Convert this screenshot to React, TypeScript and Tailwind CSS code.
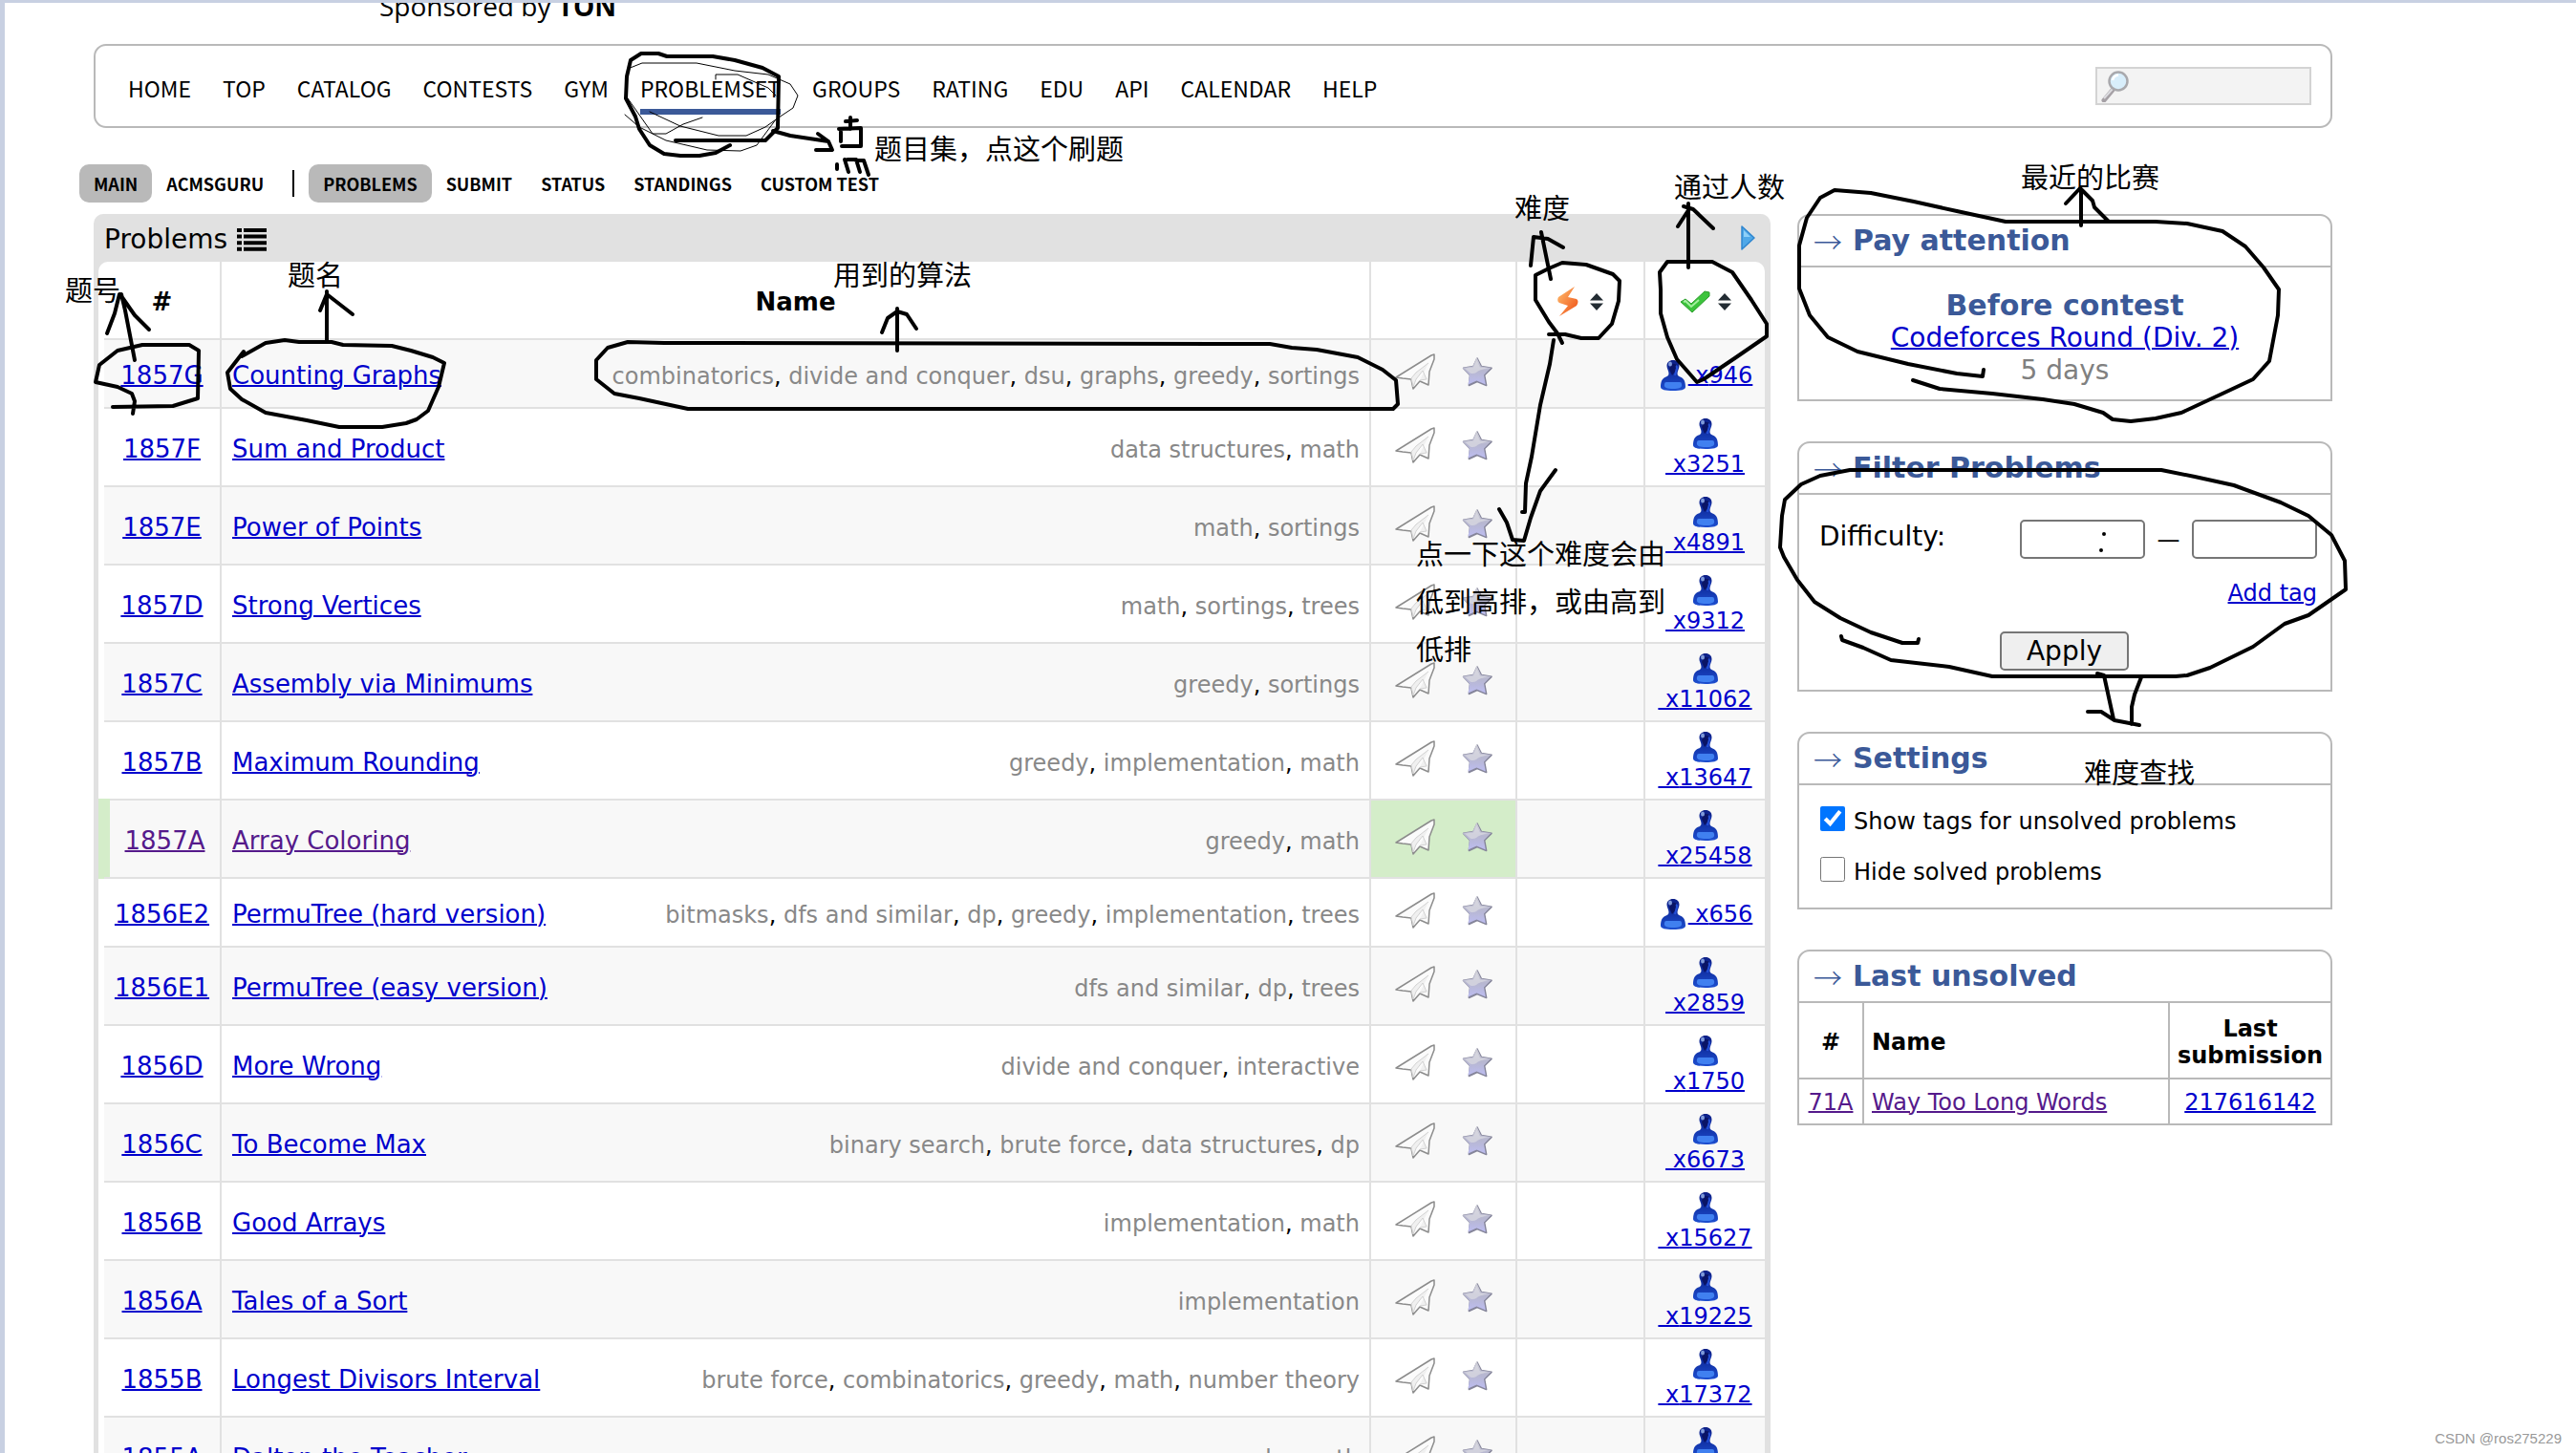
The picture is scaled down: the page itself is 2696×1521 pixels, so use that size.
import React from "react";

type Problem = { id: string; name: string; tags: string[]; solved: number; accepted?: boolean };

const NAV = ["HOME", "TOP", "CATALOG", "CONTESTS", "GYM", "PROBLEMSET", "GROUPS", "RATING", "EDU", "API", "CALENDAR", "HELP"];

const PROBLEMS: Problem[] = [
  { id: "1857G", name: "Counting Graphs", tags: ["combinatorics", "divide and conquer", "dsu", "graphs", "greedy", "sortings"], solved: 946 },
  { id: "1857F", name: "Sum and Product", tags: ["data structures", "math"], solved: 3251 },
  { id: "1857E", name: "Power of Points", tags: ["math", "sortings"], solved: 4891 },
  { id: "1857D", name: "Strong Vertices", tags: ["math", "sortings", "trees"], solved: 9312 },
  { id: "1857C", name: "Assembly via Minimums", tags: ["greedy", "sortings"], solved: 11062 },
  { id: "1857B", name: "Maximum Rounding", tags: ["greedy", "implementation", "math"], solved: 13647 },
  { id: "1857A", name: "Array Coloring", tags: ["greedy", "math"], solved: 25458, accepted: true },
  { id: "1856E2", name: "PermuTree (hard version)", tags: ["bitmasks", "dfs and similar", "dp", "greedy", "implementation", "trees"], solved: 656 },
  { id: "1856E1", name: "PermuTree (easy version)", tags: ["dfs and similar", "dp", "trees"], solved: 2859 },
  { id: "1856D", name: "More Wrong", tags: ["divide and conquer", "interactive"], solved: 1750 },
  { id: "1856C", name: "To Become Max", tags: ["binary search", "brute force", "data structures", "dp"], solved: 6673 },
  { id: "1856B", name: "Good Arrays", tags: ["implementation", "math"], solved: 15627 },
  { id: "1856A", name: "Tales of a Sort", tags: ["implementation"], solved: 19225 },
  { id: "1855B", name: "Longest Divisors Interval", tags: ["brute force", "combinatorics", "greedy", "math", "number theory"], solved: 17372 },
  { id: "1855A", name: "Dalton the Teacher", tags: ["greedy", "math"], solved: 21904 },
];

// Pen strokes, thick pen first and then the fine one
const INK = [
  "M707 147L801 147L814 134L815 80L798 71L769 63L746 59L698 59L689 56L671 56L660 63L656 80L655 103L665 122L669 135L680 152L695 161L712 163L732 163L749 160L764 152",
  "M809 137L827 142L867 148M856 140L867 148L871 157L854 157",
  "M885 127L897 126M890 123L890 135M878 135L901 134L901 153L881 153M880 138L880 148",
  "M876 172L876 177M884 167L888 180M887 167L896 167L900 180M896 168L904 168L909 183",
  "M141 377L131 325L127 308M112 349L120 328L125 308M127 310L141 330L156 345",
  "M118 426L181 425L207 417L208 367L198 361L149 361L123 367L104 382L100 400L123 405L138 412L141 420L139 433",
  "M342 357L342 305M335 325L342 308L369 329",
  "M253 373L278 359L298 356L313 358L347 358L359 361L410 362L430 367L453 374L465 380L459 405L448 430L436 439L425 443L400 447L355 447L321 440L278 432L253 418L241 407L238 390L255 368",
  "M939 367L939 323M923 348L929 333L939 326L949 329L959 344",
  "M657 358L695 359L1329 360L1352 364L1378 366L1421 374L1447 387L1461 398L1463 423L1458 428L720 428L669 417L643 412L624 397L624 377L636 364Z",
  "M1623 292L1613 243M1602 278L1605 248L1620 250L1636 259",
  "M1635 359L1630 349L1621 337L1607 314L1607 288L1621 281L1635 275L1660 277L1688 287L1695 294L1694 315L1687 339L1673 354L1655 354L1638 350L1621 350",
  "M1626 356L1622 381L1612 424L1603 478L1597 506L1596 536L1593 536M1569 533L1577 547L1583 565L1595 566L1602 542L1612 514L1628 492",
  "M1767 280L1767 213M1756 237L1767 220M1762 216L1772 219L1793 239",
  "M1737 285L1745 274L1792 274L1813 285L1833 314L1849 339L1849 352L1817 374L1783 397L1776 400L1755 376L1745 353L1738 328L1738 303Z",
  "M2178 236L2178 198M2162 213L2177 197L2190 210L2192 217L2207 232",
  "M2076 387L2075 394L2048 391L1997 381L1944 368L1913 353L1894 330L1883 302L1883 257L1891 228L1905 207L1920 199L1958 202L2003 211L2048 221L2099 232L2256 232L2289 234L2326 242L2350 258L2369 280L2385 303L2384 330L2375 378L2358 397L2326 412L2283 432L2256 438L2230 441L2211 439L2201 432L2171 423L2138 418L2085 412L2030 407L2002 398",
  "M2008 669L2007 673L1991 673L1958 662L1926 647L1899 630L1881 607L1867 583L1863 573L1865 540L1868 523L1885 507L1905 498L1936 492L2262 492L2297 499L2338 508L2387 526L2416 540L2440 560L2454 587L2455 617L2416 644L2391 653L2358 677L2313 699L2289 707L2277 708L2085 708L2040 698L1979 691L1950 678L1928 670L1927 666",
  "M2195 705L2202 707L2207 730L2212 753M2241 709L2234 727L2231 740L2231 758M2185 745L2199 745L2213 754L2239 759",
  "M2202 559L2202 559M2199 576L2199 576",
];
const FINE_INK = [
  "M657 72L672 66L729 66L769 74L804 78L827 88L835 100L830 113L815 123L801 133L781 142L752 142L712 132L680 117",
  "M749 83L749 78L772 78L804 92L812 100",
  "M654 120L669 133L697 147L740 157L775 158L792 152L812 125",
  "M657 103L683 140L697 140L715 130L735 123",
];

const LINK = "text-[#0000cc] underline decoration-2";
const VISITED = "text-[#551a8b] underline decoration-2";

function PlaneIcon() {
  return (
    <svg width="42" height="38" viewBox="0 0 42 38" className="block">
      <path d="M1 25 38 2 41 1 41 6 36 19 35 33 26 29 19 37 17 27 8 26Z" fill="#fbfbfb" stroke="#8c8c8c" strokeWidth="1.5" strokeLinejoin="round" />
      <path d="M35 10 22 20 17 26 19 35 22 27 29 18 33 27 26 28" fill="#f0f0f0" stroke="#d2d2d2" strokeWidth="1" strokeLinejoin="round" />
    </svg>
  );
}

function StarIcon() {
  return (
    <svg width="32" height="32" viewBox="0 0 32 32" className="block">
      <path d="M16 2 20.4 10.6 31 12.4 23.6 19.6 25.6 30.4 16 26.4 7.4 30.4 8.6 19.6 1.6 12.4 12 10.6Z" fill="#85859a" stroke="#85859a" strokeWidth="1.6" strokeLinejoin="round" />
      <path d="M15.4 1 20 10.600 30.400 12 23 19.400 24.800 29.400 15.400 25.400 6.600 29.400 8 19.400 .6 12 11.200 10.600Z" fill="url(#star)" />
      <path d="M3 12.6 12 11.4 15.4 4 19 11.4 28 12.6Q18 14 15 17 12 19 8.6 17.4Z" fill="#dcdce2" opacity=".7" />
    </svg>
  );
}

function UserIcon() {
  return (
    <svg width="32" height="32" viewBox="0 0 32 32" className="block">
      <path d="M16 0C12 0 9.500 2.500 9.500 6C9.500 9 11.500 11 11.500 14C11.500 16.500 10 17 7.500 18C4 19.500 3 24 3 28C3 31 8 32 16 32C24 32 29 31 29 28C29 24 28 19.500 24.500 18C22 17 20.500 16.500 20.500 14C20.500 11 22.500 9 22.500 6C22.500 2.500 20 0 16 0Z" fill="url(#user)" />
      <path d="M7 25Q7 23 9 23H23Q25 23 25 25C26 29 22 30 16 30C10 30 6 29 7 25Z" fill="#4080f0" />
      <path d="M14 4Q17 3 20 5V11Q17 13 15 16Q13 12 12 9Z" fill="#0a1466" />
      <path d="M19 6Q21 7 19.500 10L18 16" fill="none" stroke="#2450d8" strokeWidth="2" />
      <ellipse cx="13" cy="4" rx="2" ry="2.500" fill="#7f9ada" />
    </svg>
  );
}

function SortIcon() {
  return (
    <svg width="14" height="18" viewBox="0 0 14 18" className="block">
      <path d="M7 0 14 7.500H0ZM0 10.500H14L7 18Z" fill="#232c33" />
    </svg>
  );
}

function SideBox({ title, children }: { title: string; children: React.ReactNode }) {
  return (
    <section className="rounded-t-[13px] border-2 border-[#b9b9b9]">
      <h2 className="flex h-[54px] items-center gap-[11px] border-b-2 border-[#b9b9b9] pl-[15px] text-[30px] leading-9 font-bold text-[#3b5998]">
        <span className="font-['Noto_Sans_CJK_SC',sans-serif] font-light">→</span>
        {title}
      </h2>
      {children}
    </section>
  );
}

function Note({ className, children }: { className: string; children: React.ReactNode }) {
  return (
    <p className={`absolute whitespace-nowrap font-['Noto_Sans_CJK_SC',sans-serif] text-[29px] leading-[50px] ${className}`}>{children}</p>
  );
}

export default function App() {
  return (
    <div className="relative h-screen overflow-hidden border-t-[3px] border-l-[5px] border-[#c8d0e2] bg-white font-['DejaVu_Sans',Verdana,sans-serif] text-black">
      {/* shared gradients */}
      <svg width="0" height="0" className="absolute">
        <defs>
          <linearGradient id="star" x1="0" y1="0" x2="0" y2="1">
            <stop offset="0" stopColor="#cfcfd6" />
            <stop offset=".5" stopColor="#b7b7d0" />
            <stop offset="1" stopColor="#bcbcf0" />
          </linearGradient>
          <linearGradient id="user" x1="0" y1="0" x2="0" y2="1">
            <stop offset="0" stopColor="#0d1f86" />
            <stop offset=".5" stopColor="#1233a8" />
            <stop offset="1" stopColor="#1d4fd0" />
          </linearGradient>
          <linearGradient id="bolt" x1="0" y1="0" x2="1" y2="1">
            <stop offset="0" stopColor="#ffc070" />
            <stop offset="1" stopColor="#ee4a10" />
          </linearGradient>
        </defs>
      </svg>

      <div className="pr-[255px] pl-[93px]">
        <div className="h-[43px] overflow-hidden pl-[299px] font-['Open_Sans',sans-serif] text-[28px] leading-[6px]">
          Sponsored by <b>TON</b>
        </div>

        <header className="flex h-[88px] items-start justify-between rounded-[13px] border-2 border-[#b9b9b9] pr-5 pl-[34px]">
          <nav className="flex gap-[33px] pt-[26px] font-['Noto_Sans_CJK_SC',sans-serif] text-[23px] leading-9">
            {NAV.map((item) => (
              <a
                key={item}
                href="#"
                className={`border-b-[6px] pb-1 ${item === "PROBLEMSET" ? "border-[#3b5998]" : "border-transparent"}`}
              >
                {item}
              </a>
            ))}
          </nav>
          <label className="mt-[22px] flex h-10 w-[226px] items-center border-2 border-[#d3d3d3] bg-[#f3f3f3] pl-1">
            <svg width="30" height="34" viewBox="0 0 30 34" className="shrink-0">
              <path d="M13 20 3 32" stroke="#a5a0a5" strokeWidth="5" strokeLinecap="round" />
              <path d="M12 20 3 30" stroke="#dcdce0" strokeWidth="2" />
              <circle cx="18" cy="12" r="9.500" fill="#d8eefb" stroke="#a9a9ad" strokeWidth="2.500" />
              <path d="M12 11Q13 6 18 5.500" fill="none" stroke="#fff" strokeWidth="2.500" />
            </svg>
            <input type="text" aria-label="Search" className="w-full min-w-0 bg-transparent text-[24px] outline-none" />
          </label>
        </header>
      </div>

      {/* Second level menu */}
      <nav className="mt-[38px] flex h-10 items-center pl-[78px] font-['Noto_Sans_CJK_SC',sans-serif] text-[18px] leading-10 font-bold">
        <a href="#" className="rounded-[10px] bg-[#b9b9b9] px-[15px]">MAIN</a>
        <a href="#" className="px-[15px]">ACMSGURU</a>
        <span className="mx-[15px] h-7 w-0.5 bg-black" />
        <a href="#" className="rounded-[10px] bg-[#b9b9b9] px-[15px]">PROBLEMS</a>
        <a href="#" className="px-[15px]">SUBMIT</a>
        <a href="#" className="px-[15px]">STATUS</a>
        <a href="#" className="px-[15px]">STANDINGS</a>
        <a href="#" className="px-[15px]">CUSTOM TEST</a>
      </nav>

      <div className="mt-3 flex items-start gap-7 pr-[255px] pl-[93px]">
        <main className="min-w-0 flex-1 rounded-t-[10px] border-r-[6px] border-l-[5px] border-[#e1e1e1] bg-[#e1e1e1]">
          <div className="flex h-[50px] items-center justify-between pr-[10px] pl-1.5">
            <div className="flex items-center gap-2.5 pt-[3px] text-[28px]">
              Problems
              <svg width="31" height="24" viewBox="0 0 31 24">
                {[0, 6.600, 13.200, 19.800].map((y) => (
                  <path key={y} d={`M0 ${y}h5v4h-5zM7 ${y}h24v4h-24z`} />
                ))}
              </svg>
            </div>
            <svg width="15" height="26" viewBox="0 0 15 26">
              <path d="M1 1 14 13 1 25Z" fill="#4fa8e8" stroke="#2f86cf" strokeWidth="1.500" strokeLinejoin="round" />
              <path d="M3 5 10 12H3Z" fill="#8fd0f8" />
            </svg>
          </div>

          <div className="rounded-t-[10px] bg-white pl-1.5">
            <table className="w-full table-fixed border-separate border-spacing-0">
              <colgroup>
                <col className="w-[121px]" />
                <col />
                <col className="w-[153px]" />
                <col className="w-[134px]" />
                <col className="w-[127px]" />
              </colgroup>
              <thead>
                <tr className="h-20 text-[26px]">
                  <th className="pt-1">#</th>
                  <th className="border-l-2 border-[#e1e1e1] pt-1">Name</th>
                  <th className="border-l-2 border-[#e1e1e1]" />
                  <th className="border-l-2 border-[#e1e1e1] pt-1">
                    <div className="flex items-center justify-center gap-3">
                      <svg width="22" height="32" viewBox="0 0 22 32">
                        <path d="M18 0 1 11Q-1 15 2 17L11 20 2 31 20 20Q23 15 20 13L11 11Z" fill="url(#bolt)" />
                      </svg>
                      <SortIcon />
                    </div>
                  </th>
                  <th className="border-l-2 border-[#e1e1e1] pt-1">
                    <div className="flex items-center justify-center gap-2">
                      <svg width="32" height="24" viewBox="0 0 32 24">
                        <path d="M1 12 6 9 12 14 26 1 31 2 31 6 13 23Z" fill="#3cc43c" stroke="#2c9c2c" strokeWidth="1" strokeLinejoin="round" />
                        <path d="M4 12 6 11 12 17 20 10" fill="none" stroke="#a5efa0" strokeWidth="2" />
                      </svg>
                      <SortIcon />
                    </div>
                  </th>
                </tr>
              </thead>
              <tbody>
                {PROBLEMS.map((p) => (
                  <tr key={p.id} className={`odd:bg-[#f8f8f8] ${p.solved < 1000 ? "h-[72px]" : "h-[82px]"}`}>
                    <td className={`relative border-t-2 border-[#e1e1e1] pt-1 text-center text-[26px] ${p.accepted ? "pl-1.5" : ""}`}>
                      {p.accepted && <span className="absolute -top-0.5 -bottom-0.5 -left-1.5 w-3 bg-[#d4edc9]" />}
                      <a href="#" className={p.accepted ? VISITED : LINK}>{p.id}</a>
                    </td>
                    <td className="border-t-2 border-l-2 border-[#e1e1e1] pt-1 pr-[10px] pl-[11px]">
                      <div className="flex items-baseline justify-between">
                        <a href="#" className={`text-[26px] ${p.accepted ? VISITED : LINK}`}>{p.name}</a>
                        <span className="text-[24px]">
                          {p.tags.map((tag, i) => (
                            <React.Fragment key={tag}>
                              {i > 0 && ", "}
                              <a href="#" className="text-[#888]">{tag}</a>
                            </React.Fragment>
                          ))}
                        </span>
                      </div>
                    </td>
                    <td className={`border-t-2 border-l-2 border-[#e1e1e1] ${p.accepted ? "bg-[#d4edc9]" : ""}`}>
                      <div className="flex items-center justify-center gap-7 pb-1">
                        <PlaneIcon />
                        <StarIcon />
                      </div>
                    </td>
                    <td className="border-t-2 border-l-2 border-[#e1e1e1]" />
                    <td className="border-t-2 border-l-2 border-[#e1e1e1] px-[10px] pt-1">
                      <div className="flex flex-wrap items-center justify-center text-[24px] leading-8">
                        <UserIcon />
                        <a href="#" className={LINK}>&nbsp;x{p.solved}</a>
                      </div>
                    </td>
                  </tr>
                ))}
              </tbody>
            </table>
          </div>
        </main>

        <aside className="flex w-[560px] shrink-0 flex-col gap-[42px]">
          <SideBox title="Pay attention">
            <div className="pt-[23px] pb-[13px] text-center text-[28px] leading-[34px]">
              <p className="text-[30px] font-bold text-[#3b5998]">Before contest</p>
              <a href="#" className={LINK}>Codeforces Round (Div. 2)</a>
              <p className="text-[#808080]">5 days</p>
            </div>
          </SideBox>

          <SideBox title="Filter Problems">
            <form className="px-[14px] pt-[26px] pb-5 pl-[21px]">
              <div className="flex items-center">
                <label htmlFor="from" className="mr-auto self-start text-[28px] leading-9">Difficulty:</label>
                <input id="from" type="text" className="h-[41px] w-[131px] rounded-[5px] border-2 border-[#767676] bg-white px-2 text-[24px]" />
                <span className="w-[49px] text-center text-[24px]">—</span>
                <input type="text" aria-label="Difficulty to" className="h-[41px] w-[131px] rounded-[5px] border-2 border-[#767676] bg-white px-2 text-[24px]" />
              </div>
              <div className="mt-5 text-right text-[24px] leading-8">
                <a href="#" className={LINK}>Add tag</a>
              </div>
              <div className="mt-6 pr-2 text-center">
                <button type="button" className="h-[41px] w-[135px] rounded-[5px] border-2 border-[#767676] bg-[#efefef] text-[28px] leading-8">Apply</button>
              </div>
            </form>
          </SideBox>

          <SideBox title="Settings">
            <div className="flex flex-col gap-[21px] pt-[22px] pb-[21px] pl-[22px] text-[24px] leading-8">
              <label className="flex items-start gap-[9px]">
                <input type="checkbox" defaultChecked className="size-[26px] accent-[#0075ff]" />
                Show tags for unsolved problems
              </label>
              <label className="flex items-start gap-[9px]">
                <input type="checkbox" className="size-[26px] accent-[#0075ff]" />
                Hide solved problems
              </label>
            </div>
          </SideBox>

          <SideBox title="Last unsolved">
            <table className="w-full table-fixed border-separate border-spacing-0 text-[24px] leading-7">
              <colgroup>
                <col className="w-[66px]" />
                <col />
                <col className="w-[170px]" />
              </colgroup>
              <thead>
                <tr className="h-[78px]">
                  <th className="pt-1">#</th>
                  <th className="border-l-2 border-[#b9b9b9] pt-1 pl-2 text-left">Name</th>
                  <th className="border-l-2 border-[#b9b9b9] pt-1">Last submission</th>
                </tr>
              </thead>
              <tbody>
                <tr className="h-12">
                  <td className="border-t-2 border-[#b9b9b9] pt-0.5 text-center"><a href="#" className={VISITED}>71A</a></td>
                  <td className="border-t-2 border-l-2 border-[#b9b9b9] pt-0.5 pl-2"><a href="#" className={VISITED}>Way Too Long Words</a></td>
                  <td className="border-t-2 border-l-2 border-[#b9b9b9] pt-0.5 text-center"><a href="#" className={LINK}>217616142</a></td>
                </tr>
              </tbody>
            </table>
          </SideBox>
        </aside>
      </div>

      {/* Hand-written notes over the page */}
      <div className="pointer-events-none absolute -top-[3px] -left-[5px]">
        <svg width="2696" height="1521" viewBox="0 0 2696 1521" fill="none" stroke="#000" strokeLinecap="round" strokeLinejoin="round">
          {INK.map((d) => <path key={d} d={d} strokeWidth="4" />)}
          {FINE_INK.map((d) => <path key={d} d={d} strokeWidth="1" />)}
        </svg>
        <Note className="top-[129px] left-[915px]">题目集，点这个刷题</Note>
        <Note className="top-[277px] left-[68px]">题号</Note>
        <Note className="top-[261px] left-[301px]">题名</Note>
        <Note className="top-[261px] left-[872px]">用到的算法</Note>
        <Note className="top-[191px] left-[1585px]">难度</Note>
        <Note className="top-[169px] left-[1752px]">通过人数</Note>
        <Note className="top-[159px] left-[2115px]">最近的比赛</Note>
        <Note className="top-[553px] left-[1482px]">
          点一下这个难度会由<br />低到高排，或由高到<br />低排
        </Note>
        <Note className="top-[782px] left-[2181px]">难度查找</Note>
      </div>
      <p className="absolute right-[15px] bottom-1 font-['Liberation_Sans',sans-serif] text-[15px] text-[#999]">CSDN @ros275229</p>
    </div>
  );
}
